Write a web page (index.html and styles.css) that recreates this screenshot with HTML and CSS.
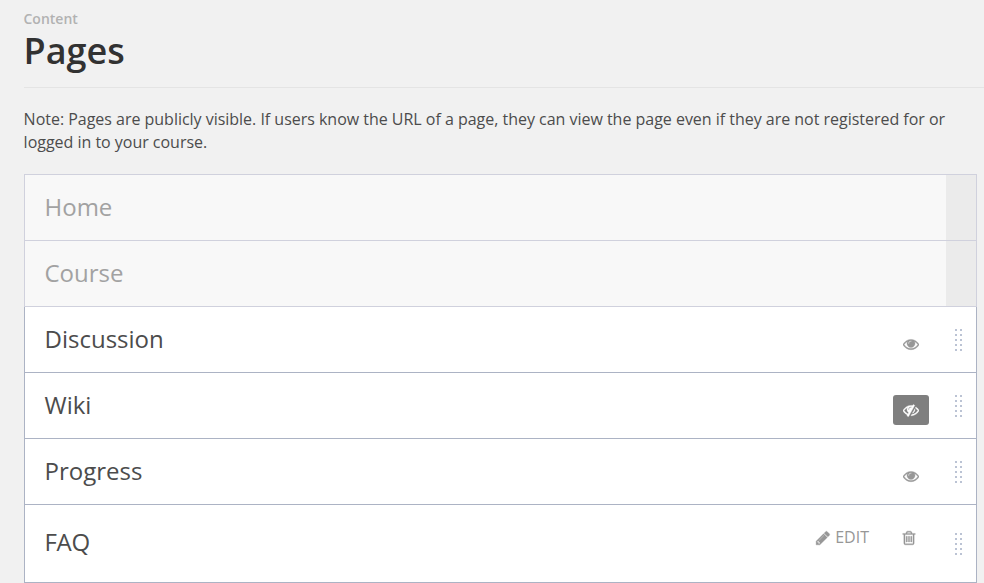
FILE: index.html
```html
<!DOCTYPE html>
<html lang="en">
<head>
    <meta charset="UTF-8">
    <meta name="viewport" content="width=device-width, initial-scale=1.0">
    <title>Pages</title>
    <link rel="stylesheet" href="styles.css">
</head>
<body>
    <!-- shared icons -->
    <svg class="sprite">
      <symbol id="icon-eye" viewBox="0 0 1792 1792">
        <path d="M1664 960q-152-236-381-353 61 104 61 225 0 185-131.5 316.5t-316.5 131.5-316.5-131.5-131.5-316.5q0-121 61-225-229 117-381 353 133 205 333.5 326.5t434.5 121.5 434.5-121.5 333.5-326.5zm-720-384q0-20-14-34t-34-14q-125 0-214.5 89.5t-89.5 214.5q0 20 14 34t34 14 34-14 14-34q0-86 61-147t147-61q20 0 34-14t14-34zm848 384q0 34-20 69-140 230-376.5 368.5t-499.5 138.5-499.5-139-376.5-368q-20-35-20-69t20-69q140-229 376.5-368t499.5-139 499.5 139 376.5 368q20 35 20 69z"/>
      </symbol>
      <symbol id="icon-eye-slash" viewBox="0 0 1792 1792">
        <path d="M555 1335l78-141q-87-63-136-159t-49-203q0-121 61-225-229 117-381 353 167 258 427 375zm389-759q0-20-14-34t-34-14q-125 0-214.5 89.5t-89.5 214.5q0 20 14 34t34 14 34-14 14-34q0-86 61-147t147-61q20 0 34-14t14-34zm363-191q0 7-1 9-106 189-316 567t-315 566l-49 89q-10 16-28 16-12 0-134-70-16-10-16-28 0-12 44-87-143-65-263.5-173t-208.5-245q-20-31-20-69t20-69q153-235 380-371t496-136q89 0 180 17l54-97q10-16 28-16 5 0 18 6t31 15.5 33 18.5 31.5 18.5 19.5 11.5q16 10 16 27zm37 447q0 139-79 253.5t-209 164.5l280-502q8 45 8 84zm448 128q0 35-20 69-39 64-109 145-150 172-347.5 267t-419.5 95l74-132q212-18 392.5-137t301.5-307q-115-179-282-294l63-112q95 64 182.5 153t144.5 184q20 34 20 69z"/>
      </symbol>
      <symbol id="icon-pencil" viewBox="0 0 1792 1792">
        <path d="M491 1536l91-91-235-235-91 91v107h128v128h107zm523-928q0-22-22-22-10 0-17 7l-542 542q-7 7-7 17 0 22 22 22 10 0 17-7l542-542q7-7 7-17zm-54-192l416 416-832 832h-416v-416zm683 96q0 53-37 90l-166 166-416-416 166-165q36-38 90-38 53 0 91 38l235 234q37 39 37 91z"/>
      </symbol>
      <symbol id="icon-trash" viewBox="0 0 1792 1792">
        <path d="M704 736v576q0 14-9 23t-23 9h-64q-14 0-23-9t-9-23v-576q0-14 9-23t23-9h64q14 0 23 9t9 23zm256 0v576q0 14-9 23t-23 9h-64q-14 0-23-9t-9-23v-576q0-14 9-23t23-9h64q14 0 23 9t9 23zm256 0v576q0 14-9 23t-23 9h-64q-14 0-23-9t-9-23v-576q0-14 9-23t23-9h64q14 0 23 9t9 23zm128 724v-948h-896v948q0 22 7 40.5t14.5 27 10.5 8.5h832q3 0 10.5-8.5t14.5-27 7-40.5zm-672-1076h448l-48-117q-7-9-17-11h-317q-10 2-17 11zm928 32v64q0 14-9 23t-23 9h-96v948q0 83-47 143.5t-113 60.5h-832q-66 0-113-58.5t-47-141.5v-952h-96q-14 0-23-9t-9-23v-64q0-14 9-23t23-9h309l70-167q15-37 54-63t79-26h320q40 0 79 26t54 63l70 167h309q14 0 23 9t9 23z"/>
      </symbol>
    </svg>

    <header class="page-header">
      <small class="subtitle">Content</small>
      <h1 class="title">Pages</h1>
    </header>
    <main class="content">
      <p class="notice">Note: Pages are publicly visible. If users know the URL of a page, they can view the page even if they are not registered for or logged in to your course.</p>
      <ul class="page-list">
        <li class="page-item is-fixed">
          <h3 class="page-name">Home</h3>
          <span class="drag-fixed"></span>
        </li>
        <li class="page-item is-fixed">
          <h3 class="page-name">Course</h3>
          <span class="drag-fixed"></span>
        </li>
        <li class="page-item">
          <h3 class="page-name">Discussion</h3>
          <button type="button" class="toggle" aria-label="Hide page"><svg class="icon"><use href="#icon-eye"/></svg></button>
          <span class="drag-handle"></span>
        </li>
        <li class="page-item">
          <h3 class="page-name">Wiki</h3>
          <button type="button" class="toggle is-hidden" aria-label="Show page"><svg class="icon"><use href="#icon-eye-slash"/></svg></button>
          <span class="drag-handle"></span>
        </li>
        <li class="page-item">
          <h3 class="page-name">Progress</h3>
          <button type="button" class="toggle" aria-label="Hide page"><svg class="icon"><use href="#icon-eye"/></svg></button>
          <span class="drag-handle"></span>
        </li>
        <li class="page-item is-custom">
          <h3 class="page-name">FAQ</h3>
          <div class="actions">
            <a href="#" class="action"><svg class="icon"><use href="#icon-pencil"/></svg>EDIT</a>
            <a href="#" class="action" aria-label="Delete"><svg class="icon"><use href="#icon-trash"/></svg></a>
          </div>
          <span class="drag-handle"></span>
        </li>
      </ul>
    </main>
</body>
</html>
```
FILE: styles.css
```css
* {
    box-sizing: border-box;
}
body {
    margin: 0;
    background-color: #f1f1f1;
    color: #4c4c4c;
    font-family: "Open Sans", "Liberation Sans", sans-serif;
    font-size: 16px;
    overflow: hidden;
}
.sprite {
    display: none;
}
.icon {
    width: 16px;
    height: 16px;
    fill: currentColor;
    stroke: currentColor;
    stroke-width: 40px;
    flex: none;
}
/* header */
.page-header {
    height: 88px;
    margin-left: 24px;
    padding-top: 9px;
    border-bottom: 1px solid #e4e4e4;
}
.subtitle {
    display: block;
    color: #b2b2b2;
    font-size: 14px;
    font-weight: 600;
    line-height: 20px;
    margin-left: -0.5px;
}
.title {
    margin: 0 0 0 -0.5px;
    color: #323232;
    font-size: 36px;
    font-weight: 600;
    line-height: 44px;
}
.content {
    margin: 0 7px 0 24px;
    padding-top: 20px;
}
.notice {
    margin: 0 0 20px -0.4px;
    letter-spacing: -0.02px;
    line-height: 23px;
}
/* list of pages */
.page-list {
    margin: 0;
    padding: 0;
    border-top: 1px solid #d0d1dd;
    list-style: none;
}
.page-item {
    display: flex;
    align-items: center;
    height: 66px;
    padding: 0 14px 0 19.5px;
    border: solid #acb3c4;
    border-width: 0 1px 1px;
    background-color: #fff;
}
.page-name {
    flex: 1;
    margin: 0;
    padding-bottom: 2px;
    font-size: 24px;
    font-weight: 400;
    line-height: 32px;
}
.is-fixed {
    padding-right: 0;
    border-color: #d0d1dd;
    background-color: #f8f8f8;
}
.is-fixed .page-name {
    color: #a2a2a2;
}
.drag-fixed {
    align-self: stretch;
    width: 30px;
    background-color: #ebebeb;
}
/* dotted grip, 2 x 5 */
.drag-handle {
    width: 7px;
    height: 22px;
    background: conic-gradient(from 270deg at 2px 2px, #bbc3d4 25%, transparent 0) 0 0 / 5px 5px;
}
.toggle {
    display: flex;
    align-items: center;
    justify-content: center;
    width: 36px;
    height: 30px;
    margin: 8px 26px 0 0;
    padding: 0;
    border: none;
    border-radius: 3px;
    background: none;
    color: #979797;
}
.toggle.is-hidden {
    background-color: #7f7f7f;
    color: #fff;
}
.is-custom {
    height: 78px;
}
.is-custom .page-name {
    padding-bottom: 4px;
    letter-spacing: -0.3px;
}
.actions {
    display: flex;
    gap: 32px;
    margin: 0 38px 14px 0;
}
.action {
    display: flex;
    align-items: center;
    gap: 4px;
    color: #979797;
    line-height: 22px;
    text-decoration: none;
}
.action .icon {
    margin-top: 2px;
}
```
